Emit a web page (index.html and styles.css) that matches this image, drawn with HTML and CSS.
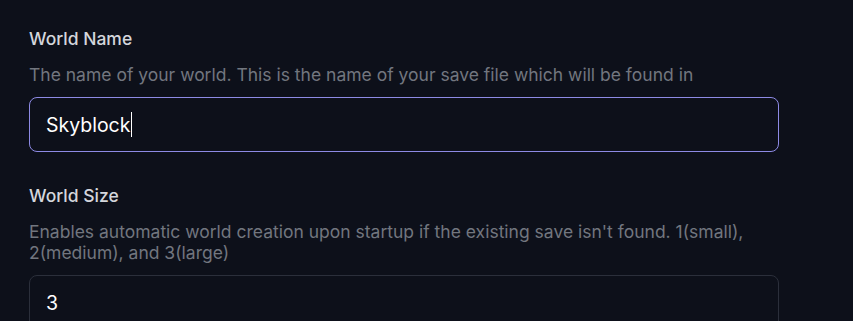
FILE: index.html
```html
<!DOCTYPE html>
<html lang="en-US">
<head>
    <meta charset="UTF-8">
    <meta name="viewport" content="width=device-width, initial-scale=1.0">
    <title>Server Settings</title>
    <link rel="stylesheet" href="styles.css">
</head>
<body>

    <div class="settings">
        <div class="setting">
            <label class="setting-label">World Name</label>
            <p class="setting-desc">The name of your world. This is the name of your save file which will be found in</p>
            <div class="field focused"><span>Skyblock</span><span class="caret"></span></div>
        </div>

        <div class="setting">
            <label class="setting-label">World Size</label>
            <p class="setting-desc">Enables automatic world creation upon startup if the existing save isn't found. 1(small), 2(medium), and 3(large)</p>
            <div class="field"><span>3</span></div>
        </div>
    </div>

</body>
</html>
```

FILE: styles.css
```css
/* page */
body {
    margin: 0;
    background: #0d101a;
    font-family: Inter, "Noto Sans", sans-serif;
    overflow: hidden;
}

.settings {
    padding: 29px 0 0 29px;
    width: 750px;
}

.setting {
    margin-bottom: 34px;
}

.setting-label {
    display: block;
    color: #d4d6dc;
    font-size: 17.5px;
    font-weight: 500;
    line-height: 20px;
}

.setting-desc {
    margin: 15px 0 12px 0;
    color: #72767f;
    font-size: 17.5px;
    line-height: 21px;
}

/* the text inputs */
.field {
    display: flex;
    align-items: center;
    height: 55px;
    box-sizing: border-box;
    padding: 0 16px;
    border: 1px solid #2b2f3b;
    border-radius: 8px;
    background: #0d101a;
    color: #ffffff;
    font-size: 19.5px;
}

.field.focused {
    border-color: #8d8ae4;
}

.caret {
    display: inline-block;
    width: 1px;
    height: 25px;
    margin-left: 1px;
    background: #ffffff;
}
```
